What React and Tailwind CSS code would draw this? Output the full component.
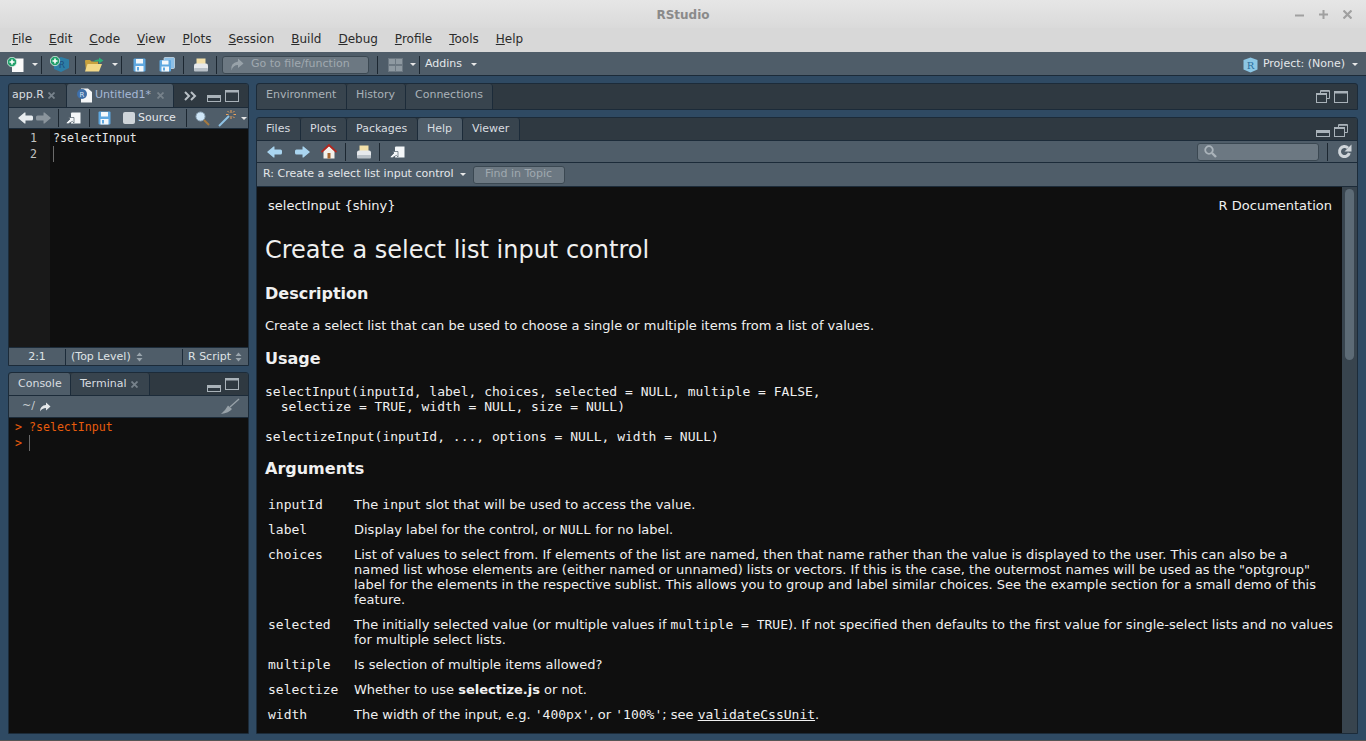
const SANS = "font-['DejaVu_Sans',sans-serif]";

const MENU = ['File', 'Edit', 'Code', 'View', 'Plots', 'Session', 'Build', 'Debug', 'Profile', 'Tools', 'Help'];

// ── Small toolbar drawings ──
function Sep() {
  return <span className="block w-px h-[18px] bg-[#1c2731] shrink-0" />;
}

function Caret({ className = '' }) {
  return <span className={`w-0 h-0 border-x-[3px] border-x-transparent border-t-[3px] border-t-[#e8e8e8] shrink-0 ${className}`} />;
}

function UpDown() {
  return (
    <svg width="7" height="10" viewBox="0 0 7 10" className="shrink-0">
      <path d="M3.5 0.5 6.5 4H.5zM3.5 9.500 .5 6h6z" fill="#9aa5ad" />
    </svg>
  );
}

function Arrow({ dir = 'left', color = '#a9d4ef', w = 15 }) {
  return (
    <svg width={w} height="12" viewBox="0 0 15 12" className="block shrink-0">
      <path
        d={dir === 'left'
          ? 'M0 6 6.500 .5H7.500V3.500H13.500Q15 3.500 15 5V7Q15 8.500 13.500 8.500H7.500V11.500H6.500z'
          : 'M15 6 8.500 .5H7.500V3.500H1.500Q0 3.500 0 5V7Q0 8.500 1.500 8.500H7.500V11.500H8.500z'}
        fill={color}
      />
    </svg>
  );
}

function Floppy() {
  return (
    <svg width="13" height="14" viewBox="0 0 13 14" className="block shrink-0">
      <rect x=".5" y=".5" width="12" height="13" rx="1" fill="#5fa8e0" />
      <rect x="3" y="1" width="7" height="4.500" fill="#f4f8fb" />
      <rect x="2.500" y="8" width="8" height="5.500" fill="#f4f8fb" />
      <rect x="4" y="9" width="2" height="3.500" fill="#5fa8e0" />
    </svg>
  );
}

function FloppyStack() {
  return (
    <svg width="16" height="15" viewBox="0 0 16 15" className="block shrink-0">
      <rect x="5" y=".5" width="10.500" height="11" rx="1" fill="#8cbfe6" stroke="#e8f2f9" strokeWidth=".6" />
      <rect x=".5" y="3" width="11.500" height="11.500" rx="1" fill="#5fa8e0" />
      <rect x="3" y="3.500" width="6.500" height="4" fill="#f4f8fb" />
      <rect x="2.500" y="9.500" width="7.500" height="5" fill="#f4f8fb" />
      <rect x="4" y="10.500" width="2" height="3" fill="#5fa8e0" />
    </svg>
  );
}

function Printer() {
  return (
    <svg width="16" height="14" viewBox="0 0 16 14" className="block shrink-0">
      <rect x="3.500" y=".5" width="9" height="6" fill="#f2dfa8" />
      <path d="M1 7.500Q1 5.500 3 5.500H13Q15 5.500 15 7.500V11H1z" fill="#e6e9ec" />
      <rect x="1" y="10" width="14" height="3.500" rx="1" fill="#b9c1c8" />
    </svg>
  );
}

function GoTo() {
  return (
    <svg width="15" height="12" viewBox="0 0 15 12" className="block shrink-0">
      <path d="M5 1.500Q5 .5 6 .5H14.500V11.500H5z" fill="#f4f7f9" />
      <path d="M0 11 4 7 2.500 5.500H8V11L6.300 9.300 2 12z" fill="#f4f7f9" stroke="#4f5d69" strokeWidth=".7" />
    </svg>
  );
}

function RDoc() {
  return (
    <svg width="16" height="15" viewBox="0 0 16 15" className="shrink-0">
      <path d="M4 .5H11L15 4V14.500H4z" fill="#f6f7f8" />
      <circle cx="5" cy="6" r="5" fill="#3f6fa8" />
      <text x="5" y="8.500" fontSize="7" fill="#dbe7f2" textAnchor="middle" fontFamily="DejaVu Sans">R</text>
    </svg>
  );
}

function NewFile() {
  return (
    <svg width="17" height="15" viewBox="0 0 17 15" className="shrink-0">
      <rect x="5" y="1.500" width="11.500" height="13.500" fill="#fafafa" />
      <circle cx="5" cy="5" r="4.700" fill="#22a06b" stroke="#dff3ea" strokeWidth=".8" />
      <path d="M5 2.500V7.500M2.500 5H7.500" stroke="#fff" strokeWidth="1.600" />
    </svg>
  );
}

function NewProject() {
  return (
    <svg width="20" height="17" viewBox="0 0 20 17" className="block shrink-0">
      <path d="M11 1 19 3.500V12L11 16 4 13V4z" fill="#2d7ea6" />
      <text x="12" y="12" fontSize="9" fill="#1d4f7d" textAnchor="middle" fontFamily="DejaVu Sans">R</text>
      <circle cx="5" cy="5" r="4.700" fill="#22a06b" stroke="#dff3ea" strokeWidth=".8" />
      <path d="M5 2.500V7.500M2.500 5H7.500" stroke="#fff" strokeWidth="1.600" />
    </svg>
  );
}

function OpenFolder() {
  return (
    <svg width="20" height="15" viewBox="0 0 20 15" className="block shrink-0">
      <path d="M1 4Q1 3 2 3H6L7.500 4.500H14V14H2z" fill="#c9a23e" />
      <path d="M3.500 7H18L15 14.500H1z" fill="#f3d988" />
      <path d="M9 5Q11 2 15 2.500V.5L19.500 3.500 15 6.500V4.500Q12 4 9 5z" fill="#2fae7a" />
    </svg>
  );
}

function Magnifier() {
  return (
    <svg width="15" height="15" viewBox="0 0 15 15" className="block shrink-0">
      <path d="M9 9 14 14" stroke="#a5793f" strokeWidth="2" />
      <circle cx="5.500" cy="5.500" r="4.500" fill="#cfe6f7" stroke="#8fa6b8" />
    </svg>
  );
}

function Wand() {
  return (
    <svg width="19" height="17" viewBox="0 0 19 17" className="block shrink-0">
      <path d="M1 16 11 6" stroke="#8fc3e6" strokeWidth="2" />
      <path d="M13 0V3M13 6V9M8 4.500H10.500M15.500 4.500H18M9.500 1 11 2.500M16.500 1 15 2.500M16.500 8 15 6.500" stroke="#e8a05a" strokeWidth="1" />
    </svg>
  );
}

function Broom() {
  return (
    <svg width="19" height="17" viewBox="0 0 19 17" className="block shrink-0">
      <path d="M18 1 9 9" stroke="#98a2a9" strokeWidth="1.300" />
      <path d="M7 7.500 11 11Q8 15 0 16 4 13 7 7.500z" fill="#98a2a9" />
    </svg>
  );
}

function House() {
  return (
    <svg width="16" height="15" viewBox="0 0 16 15" className="block shrink-0">
      <path d="M2.500 7V14.500H13.500V7L8 2z" fill="#f3f0ea" />
      <rect x="6.500" y="9" width="3" height="5.500" fill="#a5642e" />
      <path d="M.5 8 8 1 15.500 8" fill="none" stroke="#b3261e" strokeWidth="1.800" />
    </svg>
  );
}

function Refresh() {
  return (
    <svg width="15" height="15" viewBox="0 0 15 15" className="block shrink-0">
      <path d="M11 4A5 5 0 1 0 12.300 9" fill="none" stroke="#cfd5da" strokeWidth="3" />
      <path d="M14.500 .5V7.500H7.500z" fill="#cfd5da" />
    </svg>
  );
}

function SearchGlass() {
  return (
    <svg width="13" height="13" viewBox="0 0 13 13" className="block shrink-0">
      <circle cx="5" cy="5" r="3.800" fill="none" stroke="#aab3ba" strokeWidth="1.800" />
      <path d="M8 8 12 12" stroke="#aab3ba" strokeWidth="2.400" />
    </svg>
  );
}

function Minimize({ color = '#a9b2b9' }) {
  return (
    <svg width="14" height="7" viewBox="0 0 14 7" className="block shrink-0">
      <rect x=".5" y=".5" width="13" height="6" fill="none" stroke={color} />
      <rect x="1" y="1" width="12" height="2" fill={color} />
    </svg>
  );
}

function Maximize({ color = '#a9b2b9' }) {
  return (
    <svg width="14" height="12" viewBox="0 0 14 12" className="block shrink-0">
      <rect x=".5" y=".5" width="13" height="11" fill="none" stroke={color} />
      <rect x="1" y="1" width="12" height="1.500" fill={color} />
    </svg>
  );
}

function Restore({ color = '#a9b2b9' }) {
  return (
    <svg width="14" height="13" viewBox="0 0 14 13" className="block shrink-0">
      <path d="M4.500 3V.5H13.500V8.500H10.500" fill="none" stroke={color} />
      <rect x=".5" y="3.500" width="10" height="9" fill="none" stroke={color} />
      <path d="M1 4.500H10M5 1.300H13" stroke={color} />
    </svg>
  );
}

function ProjectBadge() {
  return (
    <svg width="15" height="16" viewBox="0 0 15 16" className="shrink-0">
      <path d="M7.500 .5 14.500 3V12.500L7.500 15.500 .5 12.500V3z" fill="#8cc6e4" />
      <text x="7.500" y="11.500" fontSize="10" fill="#2a6f9e" textAnchor="middle" fontFamily="DejaVu Serif">R</text>
    </svg>
  );
}

function CloseX() {
  return (
    <svg width="7" height="7" viewBox="0 0 7 7" className="ml-[4px] shrink-0">
      <path d="M.5 .5 6.500 6.500M6.500 .5 .5 6.500" stroke="#77828b" strokeWidth="1.800" />
    </svg>
  );
}

// ── Pane tabs ──
function Tab({ label, active, close, blue, dim, icon, className = '' }) {
  return (
    <div
      className={`flex items-center h-full rounded-t-[3px] border-r border-[#1c2b39] text-[11px] shrink-0
                  ${active ? 'bg-[#4f5d69]' : 'bg-[#38444e]'}
                  ${blue ? 'text-[#a6b8d6]' : dim ? 'text-[#aab2b8]' : 'text-[#d9dde0]'} ${className}`}
    >
      {icon}
      <span>{label}</span>
      {close && <CloseX />}
    </div>
  );
}

// ── Help page data ──
const MONO = "font-['DejaVu_Sans_Mono',monospace]";

const ARGS = [
  ['inputId', <>The <code className={MONO}>input</code> slot that will be used to access the value.</>],
  ['label', <>Display label for the control, or <code className={MONO}>NULL</code> for no label.</>],
  ['choices', <>List of values to select from. If elements of the list are named, then that name rather than the value is displayed to the user. This can also be a named list whose elements are (either named or unnamed) lists or vectors. If this is the case, the outermost names will be used as the "optgroup" label for the elements in the respective sublist. This allows you to group and label similar choices. See the example section for a small demo of this feature.</>],
  ['selected', <>The initially selected value (or multiple values if <code className={MONO}>multiple = TRUE</code>). If not specified then defaults to the first value for single-select lists and no values for multiple select lists.</>],
  ['multiple', <>Is selection of multiple items allowed?</>],
  ['selectize', <>Whether to use <b>selectize.js</b> or not.</>],
  ['width', <>The width of the input, e.g. <code className={MONO}>'400px'</code>, or <code className={MONO}>'100%'</code>; see <code className={`${MONO} underline`}>validateCssUnit</code>.</>],
];

export default function App() {
  return (
    <div className={`w-[1366px] h-[741px] overflow-hidden flex flex-col bg-[#2f4a63] ${SANS}`}>

      {/* ── Window title ── */}
      <div className="h-[28px] shrink-0 relative flex items-center justify-center pt-[1px] bg-gradient-to-b from-[#e6e6e6] to-[#dadada]">
        <span className="text-[12px] font-bold text-[#8a8a8a]">RStudio</span>
        <div className="absolute right-[14px] top-[10px] flex items-center gap-[15px]">
          <svg width="9" height="9" viewBox="0 0 9 9"><path d="M0 5.500H9" stroke="#a0a0a0" strokeWidth="2" /></svg>
          <svg width="9" height="9" viewBox="0 0 9 9"><path d="M0 4.500H9M4.500 0V9" stroke="#a0a0a0" strokeWidth="2" /></svg>
          <svg width="9" height="9" viewBox="0 0 9 9"><path d="M.5 .5 8.500 8.500M8.500 .5 .5 8.500" stroke="#a0a0a0" strokeWidth="2.200" /></svg>
        </div>
      </div>

      {/* ── Menu bar ── */}
      <div className="h-[24px] shrink-0 flex items-center pl-[12px] pb-[2px] gap-[17px] bg-[#d8d8d8] text-[12px] text-[#2b2b2b]">
        {MENU.map(m => (
          <span key={m}><span className="underline">{m[0]}</span>{m.slice(1)}</span>
        ))}
      </div>

      {/* ── Main toolbar ── */}
      <div className="h-[24px] shrink-0 flex items-center bg-[#4f5d69] border-b border-[#1c2b39] pl-[7px] pr-[8px] pt-[2px] text-[11px] text-[#e4e7e9]">
        <NewFile />
        <Caret className="ml-[8px]" />
        <span className="ml-[3px]"><Sep /></span>
        <span className="ml-[8px]"><NewProject /></span>
        <span className="ml-[5px]"><Sep /></span>
        <span className="ml-[8px]"><OpenFolder /></span>
        <Caret className="ml-[8px]" />
        <span className="ml-[3px]"><Sep /></span>
        <span className="ml-[11px]"><Floppy /></span>
        <span className="ml-[13px]"><FloppyStack /></span>
        <span className="ml-[8px]"><Sep /></span>
        <span className="ml-[9px]"><Printer /></span>
        <span className="ml-[7px]"><Sep /></span>
        <div className="ml-[5px] w-[147px] h-[18px] rounded-[3px] bg-[#6c7882] border border-[#3b4852] flex items-center pl-[7px] gap-[7px] text-[#a0a9b0] overflow-hidden">
          <svg width="14" height="13" viewBox="0 0 14 13" className="shrink-0">
            <path d="M8 .5 13.500 5.500 8 10V7Q3 7 1.500 12.500 0 5 8 3.500z" fill="#98a2a9" />
          </svg>
          <span className="whitespace-nowrap">Go to file/function</span>
        </div>
        <span className="ml-[8px]"><Sep /></span>
        <svg width="15" height="14" viewBox="0 0 15 14" className="ml-[10px] shrink-0">
          <rect width="15" height="14" fill="#6c7882" />
          <path d="M1 1H7V6H1zM8 1H14V6H8zM1 8H7V13H1zM8 8H14V13H8z" fill="#8e99a1" />
        </svg>
        <Caret className="ml-[7px]" />
        <span className="ml-[3px]"><Sep /></span>
        <span className="ml-[5px]">Addins</span>
        <Caret className="ml-[9px]" />
        <div className="ml-auto flex items-center">
          <ProjectBadge />
          <span className="ml-[5px]">Project: (None)</span>
          <Caret className="ml-[7px]" />
        </div>
      </div>

      {/* ── Panes ── */}
      <div className="flex-1 min-h-0 flex gap-[7px] pl-[8px] pr-[8px] pt-[7px] pb-[6px]">

        {/* Left column */}
        <div className="w-[241px] shrink-0 flex flex-col gap-[6px]">

          {/* Source pane */}
          <div className="h-[283px] shrink-0 flex flex-col border border-[#1c2b39] rounded-t-[3px] overflow-hidden">
            <div className="h-[24px] shrink-0 flex items-stretch bg-[#2f3941] border-b border-[#1c2b39]">
              <Tab label="app.R" close className="w-[58px] pl-[3px]" />
              <Tab
                label="Untitled1*"
                active
                blue
                close
                className="w-[107px] pl-[10px] gap-[2px]"
                icon={<RDoc />}
              />
              <div className="flex-1 flex items-center pl-[10px] pr-[9px]">
                <svg width="13" height="10" viewBox="0 0 13 10" className="shrink-0">
                  <path d="M1 1 5 5 1 9M7 1 11 5 7 9" fill="none" stroke="#b9c0c6" strokeWidth="2" />
                </svg>
                <div className="ml-auto flex items-end gap-[4px]">
                  <Minimize />
                  <Maximize />
                </div>
              </div>
            </div>
            <div className="h-[21px] shrink-0 flex items-center bg-[#4f5d69] border-b border-[#1c2b39] pl-[9px] text-[11px] text-[#e4e7e9]">
              <Arrow color="#e8ecef" />
              <span className="ml-[3px]"><Arrow dir="right" color="#8a949c" /></span>
              <span className="ml-[7px]"><Sep /></span>
              <span className="ml-[7px]"><GoTo /></span>
              <span className="ml-[8px]"><Sep /></span>
              <span className="ml-[8px]"><Floppy /></span>
              <span className="ml-[12px] w-[12px] h-[12px] rounded-[2px] bg-[#cfd5da] shrink-0" />
              <span className="ml-[3px]">Source</span>
              <span className="ml-[10px]"><Sep /></span>
              <span className="ml-[8px]"><Magnifier /></span>
              <span className="ml-[8px]"><Wand /></span>
              <Caret className="ml-[4px]" />
            </div>
            <div className="flex-1 min-h-0 flex bg-[#0f0f0f] font-['DejaVu_Sans_Mono',monospace] text-[11.600px] leading-[16px]">
              <div className="w-[41px] pt-[1px] bg-[#191919] text-[#c2c2c2] text-right pr-[13px] shrink-0">
                <div>1</div>
                <div>2</div>
              </div>
              <div className="pl-[3px] pt-[1px] text-[#e6e6e6]">
                <div>?selectInput</div>
                <div className="w-px h-[16px] bg-[#6a6a6a]" />
              </div>
            </div>
            <div className="h-[18px] shrink-0 flex items-stretch bg-[#4f5d69] border-t border-[#1c2b39] pt-[1px] text-[11px] text-[#dfe3e6]">
              <div className="w-[57px] flex items-center justify-center border-r border-[#1c2b39]">2:1</div>
              <div className="w-[117px] flex items-center pl-[5px] gap-[5px] border-r border-[#1c2b39]">
                (Top Level) <UpDown />
              </div>
              <div className="flex-1 flex items-center pl-[5px] gap-[4px]">
                R Script <UpDown />
              </div>
            </div>
          </div>

          {/* Console pane */}
          <div className="flex-1 min-h-0 flex flex-col border border-[#1c2b39] rounded-t-[3px] overflow-hidden">
            <div className="h-[23px] shrink-0 flex items-stretch bg-[#2f3941] border-b border-[#1c2b39]">
              <Tab label="Console" active className="w-[62px] pl-[9px]" />
              <Tab label="Terminal" close className="w-[79px] pl-[9px]" />
              <div className="flex-1 flex items-center justify-end gap-[4px] pr-[9px]">
                <span className="self-end mb-[3px]"><Minimize /></span>
                <Maximize />
              </div>
            </div>
            <div className="h-[22px] shrink-0 flex items-center bg-[#4f5d69] border-b border-[#1c2b39] pl-[13px] pr-[8px] text-[11px] text-[#c9ced2]">
              <span>~/</span>
              <svg width="12" height="10" viewBox="0 0 12 10" className="ml-[4px] shrink-0">
                <path d="M7 .5 11.500 4.500 7 8.500V6Q3 6 1 9.500 1 3.500 7 3z" fill="#e4e7e9" />
              </svg>
              <span className="ml-auto"><Broom /></span>
            </div>
            <div className="flex-1 min-h-0 bg-[#0f0f0f] pt-[1px] pl-[6px] font-['DejaVu_Sans_Mono',monospace] text-[11.600px] leading-[16px] text-[#e85c0d]">
              <div>&gt; ?selectInput</div>
              <div className="flex">
                <span>&gt;&nbsp;</span>
                <span className="w-px h-[16px] bg-[#6a6a6a]" />
              </div>
            </div>
          </div>
        </div>

        {/* Right column */}
        <div className="flex-1 min-w-0 flex flex-col gap-[7px]">

          {/* Environment pane */}
          <div className="h-[27px] shrink-0 flex items-stretch bg-[#2f3941] border border-[#1c2b39] rounded-t-[3px] overflow-hidden">
            <Tab label="Environment" dim className="w-[90px] pl-[9px] pb-[2px]" />
            <Tab label="History" dim className="w-[59px] pl-[9px] pb-[2px]" />
            <Tab label="Connections" dim className="w-[87px] pl-[9px] pb-[2px]" />
            <div className="flex-1 flex items-center justify-end gap-[4px] pr-[9px]">
              <Restore />
              <Maximize />
            </div>
          </div>

          {/* Help pane */}
          <div className="flex-1 min-h-0 flex flex-col border border-[#1c2b39] rounded-t-[3px] overflow-hidden">
            <div className="h-[23px] shrink-0 flex items-stretch bg-[#2f3941] border-b border-[#1c2b39]">
              <Tab label="Files" className="w-[44px] pl-[9px]" />
              <Tab label="Plots" className="w-[46px] pl-[9px]" />
              <Tab label="Packages" className="w-[71px] pl-[9px]" />
              <Tab label="Help" active className="w-[45px] pl-[9px]" />
              <Tab label="Viewer" className="w-[57px] pl-[9px]" />
              <div className="flex-1 flex items-end justify-end gap-[4px] pr-[9px] pb-[3px]">
                <Minimize />
                <Restore />
              </div>
            </div>
            <div className="h-[22px] shrink-0 flex items-center bg-[#4f5d69] border-b border-[#1c2b39] pl-[10px] pr-[5px]">
              <Arrow />
              <span className="ml-[13px]"><Arrow dir="right" /></span>
              <span className="ml-[11px]"><House /></span>
              <span className="ml-[8px]"><Sep /></span>
              <span className="ml-[10px]"><Printer /></span>
              <span className="ml-[7px]"><Sep /></span>
              <span className="ml-[10px]"><GoTo /></span>
              <div className="ml-auto w-[122px] h-[18px] rounded-[3px] bg-[#6c7882] border border-[#3b4852] flex items-center pl-[6px]">
                <SearchGlass />
              </div>
              <span className="ml-[8px]"><Sep /></span>
              <span className="ml-[9px]"><Refresh /></span>
            </div>
            <div className="h-[24px] shrink-0 flex items-center bg-[#4f5d69] border-b border-[#1c2b39] pl-[6px] text-[11px] text-[#e4e7e9]">
              <span>R: Create a select list input control</span>
              <Caret className="ml-[6px]" />
              <div className="ml-[7px] w-[92px] h-[18px] rounded-[3px] bg-[#6c7882] border border-[#3b4852] flex items-center justify-center text-[#a0a9b0]">
                Find in Topic
              </div>
            </div>
            <div className="flex-1 min-h-0 flex bg-[#0f0f0f]">
              <div className="flex-1 min-w-0 overflow-hidden pl-[8px] pr-[9px] text-[13px] leading-[15px] text-[#f0f0f0]">
                <div className="flex justify-between pl-[3px] pr-[1px] pt-[11px]">
                  <span>selectInput {'{shiny}'}</span>
                  <span>R Documentation</span>
                </div>
                <h1 className="text-[24px] leading-[28px] mt-[23px]">Create a select list input control</h1>
                <h2 className="text-[16px] leading-[19px] font-bold mt-[20px]">Description</h2>
                <p className="mt-[15px]">Create a select list that can be used to choose a single or multiple items from a list of values.</p>
                <h2 className="text-[16px] leading-[19px] font-bold mt-[16px]">Usage</h2>
                <pre className={`mt-[16px] ${MONO}`}>{`selectInput(inputId, label, choices, selected = NULL, multiple = FALSE,
  selectize = TRUE, width = NULL, size = NULL)

selectizeInput(inputId, ..., options = NULL, width = NULL)`}</pre>
                <h2 className="text-[16px] leading-[19px] font-bold mt-[15px]">Arguments</h2>
                <div className="mt-[19px] flex flex-col gap-[10px]">
                  {ARGS.map(([name, desc]) => (
                    <div key={name} className="flex">
                      <code className={`w-[89px] pl-[3px] shrink-0 ${MONO}`}>{name}</code>
                      <div className="flex-1 min-w-0">{desc}</div>
                    </div>
                  ))}
                </div>
              </div>
              <div className="w-[15px] shrink-0 bg-[#38444e] pt-[2px] pl-[3px] pr-[3px]">
                <div className="h-[171px] rounded-[5px] bg-[#5d6b76]" />
              </div>
            </div>
          </div>
        </div>
      </div>
      <div className="h-[1px] shrink-0 bg-[#555555]" />
    </div>
  );
}
